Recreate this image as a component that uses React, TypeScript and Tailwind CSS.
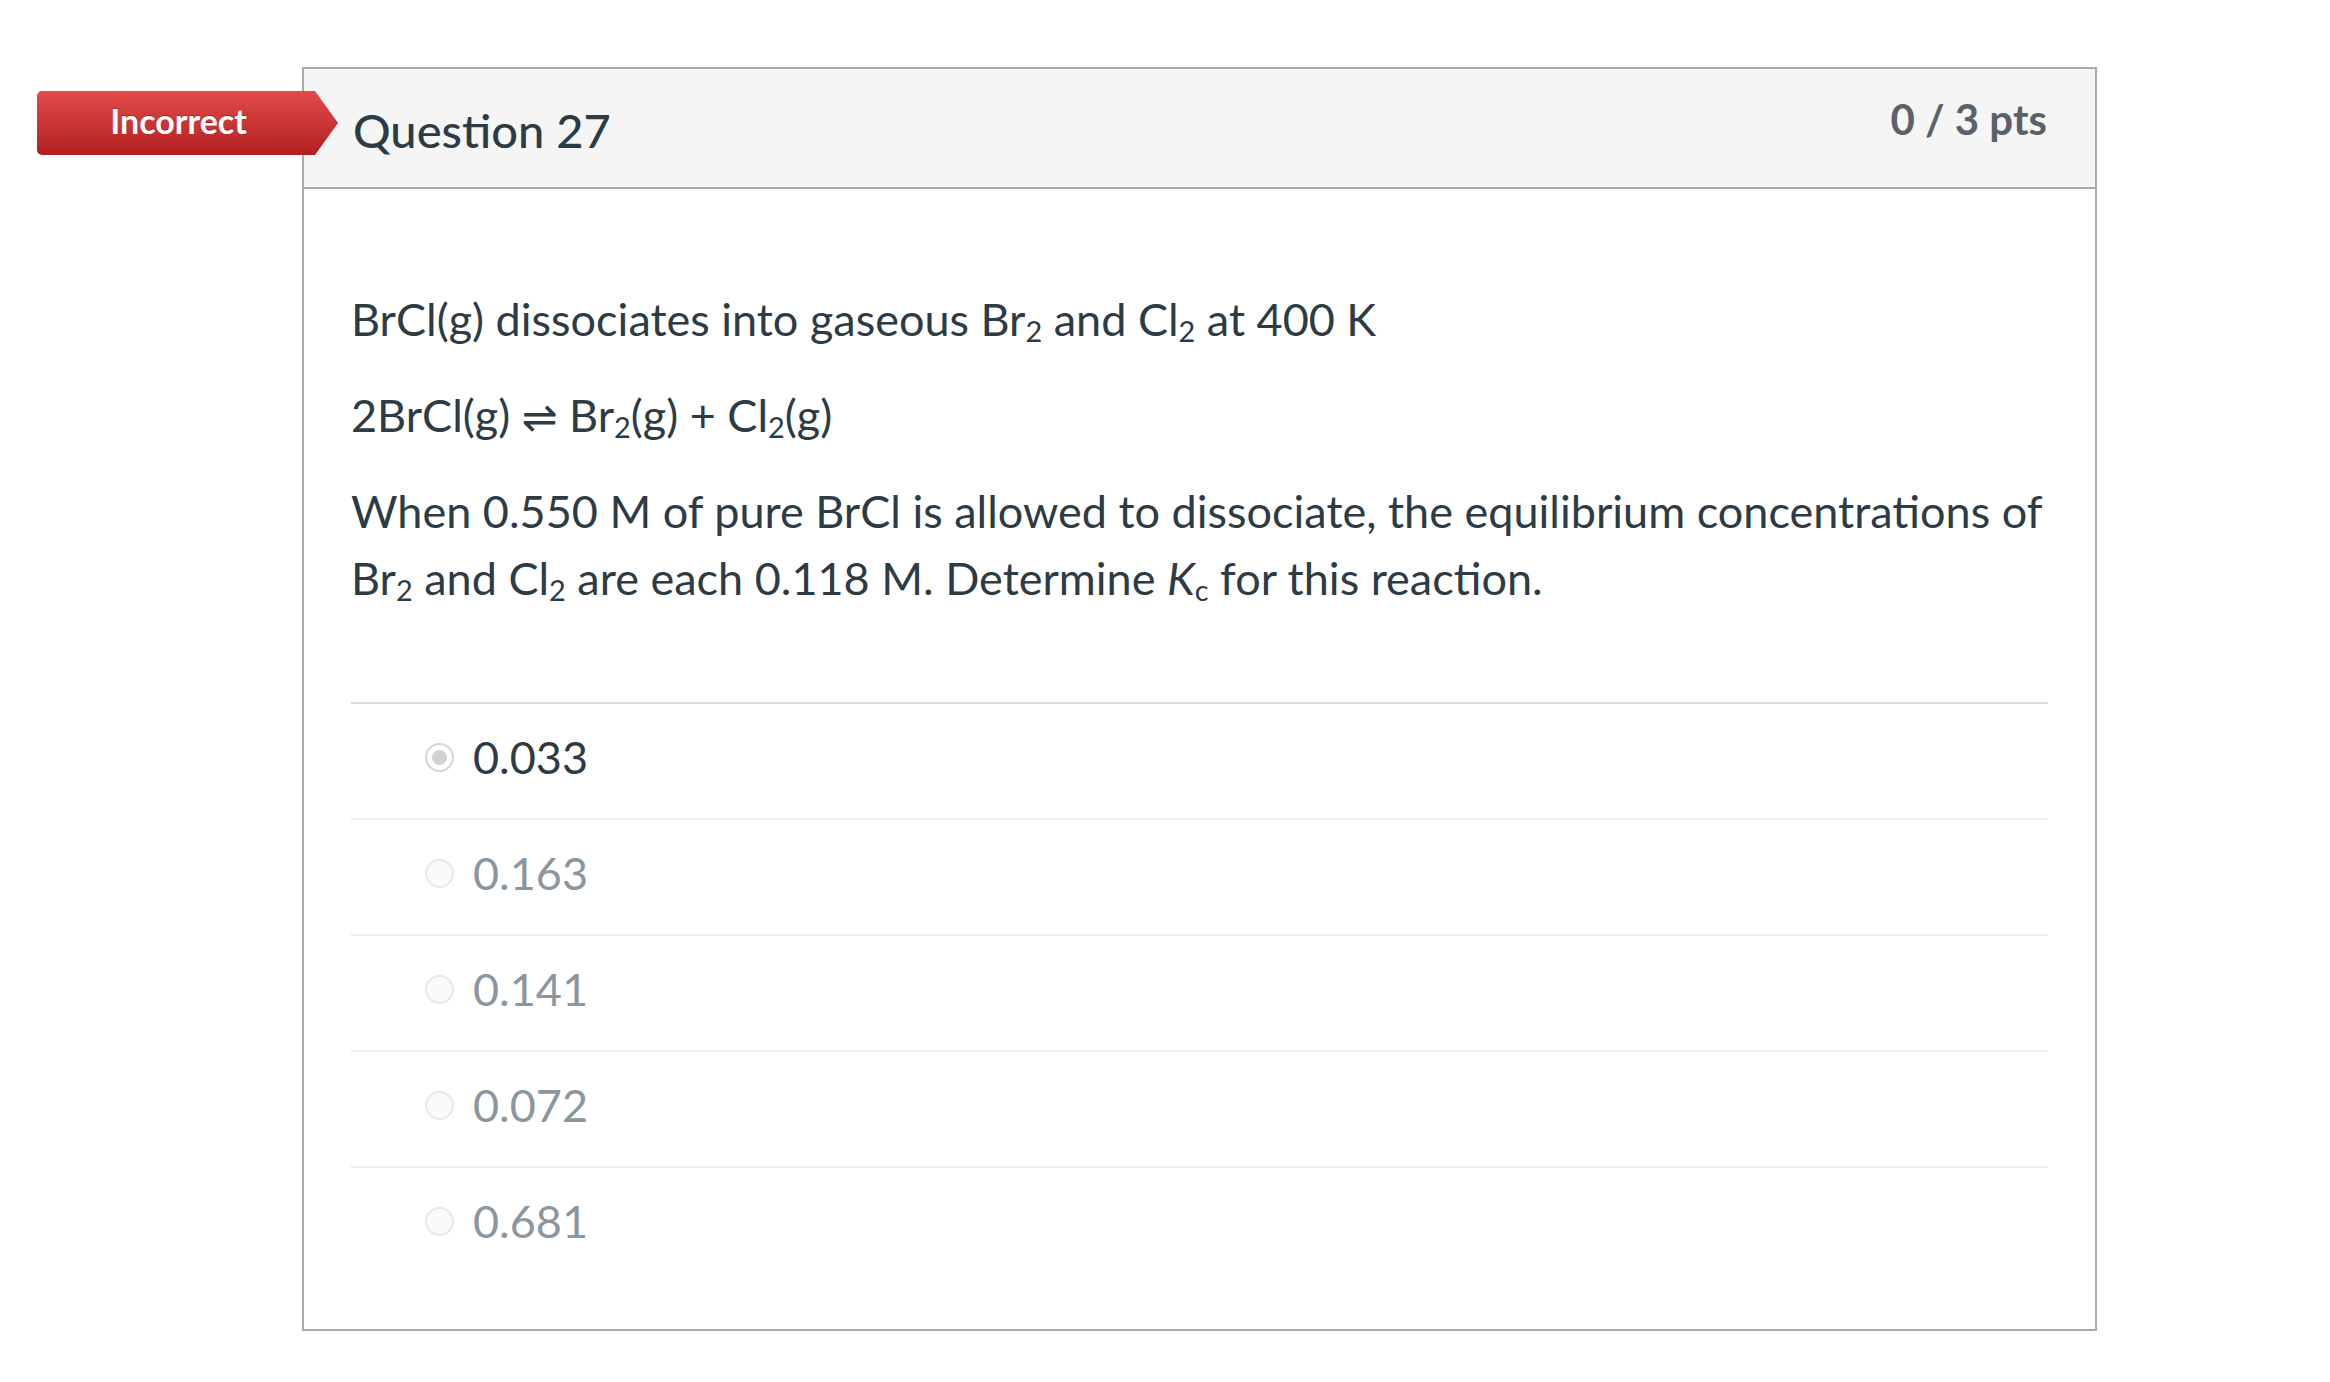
import React from "react"

interface IOption {
  value: string
  selected?: boolean
}

const options: IOption[] = [
  { value: "0.033", selected: true },
  { value: "0.163" },
  { value: "0.141" },
  { value: "0.072" },
  { value: "0.681" },
]

function Sub({ children }: { children: React.ReactNode }) {
  return (
    <span className="relative top-[0.22em] text-[0.64em] leading-none">
      {children}
    </span>
  )
}

function Radio({ checked }: { checked?: boolean }) {
  return checked ? (
    <span className="flex h-[29px] w-[29px] shrink-0 items-center justify-center rounded-full border-2 border-[#d6d6d6] bg-white">
      <span className="h-[15px] w-[15px] rounded-full bg-[#d2d2d2]" />
    </span>
  ) : (
    <span className="h-[29px] w-[29px] shrink-0 rounded-full border-2 border-[#e8e8e8] bg-[#fafafa]" />
  )
}

export default function App() {
  return (
    <div className="min-h-screen bg-white pt-[67px] font-['Lato','Open_Sans',sans-serif] text-[#2d3b45]">
      <div className="relative ml-[302px] w-[1795px] border-2 border-[#aaaaaa]">
        {/* badge */}
        <div className="absolute -left-[267px] top-[22px] flex h-[64px] w-[301px] items-center rounded-l-[5px] bg-gradient-to-b from-[#e44a4a] to-[#b01f1f] [clip-path:polygon(0_0,278px_0,100%_50%,278px_100%,0_100%)]">
          <span className="w-[278px] pb-[6px] pl-[5px] text-center text-[34px] font-bold text-white [text-shadow:0_-1px_0_rgba(0,0,0,0.25)]">
            Incorrect
          </span>
        </div>

        <header className="flex h-[120px] items-start justify-between border-b-2 border-[#aaaaaa] bg-[#f5f5f5] pl-[49px] pr-[48px]">
          <h2 className="pt-[33px] text-[47px] leading-[1.2] font-medium">
            Question 27
          </h2>
          <div className="pt-[25px] text-[42px] leading-[1.2] font-bold text-[#5a6168]">
            0 / 3 pts
          </div>
        </header>

        <div className="px-[47px] pt-[97px] pb-[47px]">
          <p className="mb-[30px] text-[45px] leading-[66px]">
            BrCl(g) dissociates into gaseous Br<Sub>2</Sub> and Cl<Sub>2</Sub> at 400 K
          </p>
          <p className="mb-[30px] text-[45px] leading-[66px]">
            2BrCl(g){" "}
            <span className="font-['DejaVu_Sans',sans-serif] text-[0.95em] leading-none">
              ⇌
            </span>{" "}
            Br<Sub>2</Sub>(g) + Cl<Sub>2</Sub>(g)
          </p>
          <p className="text-[45px] leading-[67px]">
            When 0.550 M of pure BrCl is allowed to dissociate, the equilibrium
            concentrations of Br<Sub>2</Sub> and Cl<Sub>2</Sub> are each 0.118 M.
            Determine <i>K</i>
            <Sub>c</Sub> for this reaction.
          </p>

          <div className="mt-[90px]">
            {options.map((option, index) => (
              <div
                key={option.value}
                className={
                  index === 0
                    ? "flex h-[116px] items-center gap-[19px] border-t-2 border-[#dcdcdc] pb-[8px] pl-[74px]"
                    : "flex h-[116px] items-center gap-[19px] border-t-2 border-[#ececec] pb-[8px] pl-[74px]"
                }
              >
                <Radio checked={option.selected} />
                <span
                  className={
                    option.selected
                      ? "text-[45px] leading-none text-[#2d3b45]"
                      : "text-[45px] leading-none text-[#8b969e]"
                  }
                >
                  {option.value}
                </span>
              </div>
            ))}
          </div>
        </div>
      </div>
    </div>
  )
}
